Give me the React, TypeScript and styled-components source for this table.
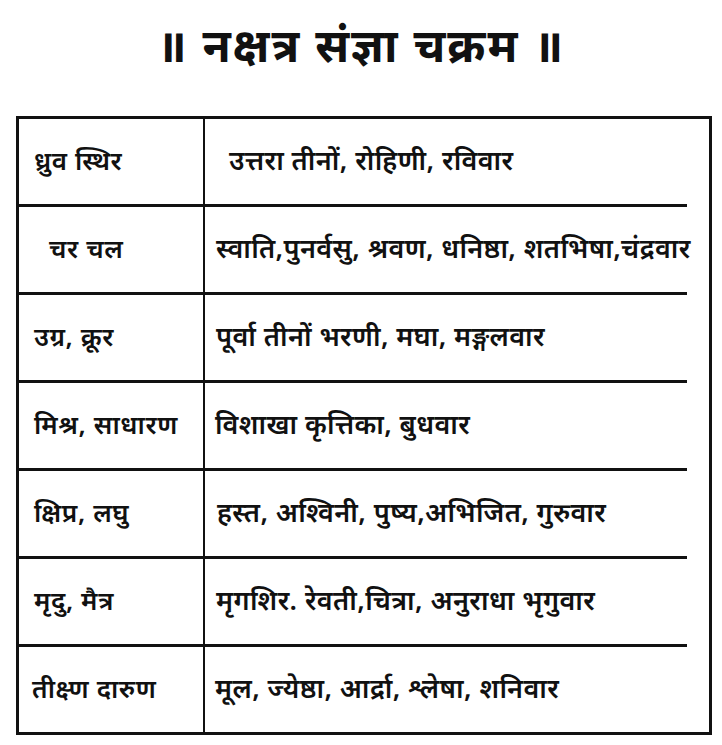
import styled, { createGlobalStyle } from 'styled-components'

const GlobalStyle = createGlobalStyle`
  html, body {
    margin: 0;
    padding: 0;
    background: #fff;
  }
  body {
    font-family: "Noto Sans", "Noto Sans Devanagari", "Lohit Devanagari", sans-serif;
    color: #111;
  }
`

const Page = styled.div`
  width: 722px;
  height: 745px;
  overflow: hidden;
  background: #fff;
`

const Title = styled.h1`
  margin: 0;
  height: 116px;
  padding-top: 14px;
  box-sizing: border-box;
  text-align: center;
  font-size: 46px;
  font-weight: 700;
  line-height: 60px;
  letter-spacing: 2px;
`

const Table = styled.div`
  margin-left: 16px;
  width: 696px;
  border: 3px solid #111;
  box-sizing: border-box;
`

const Row = styled.div<{ $last?: boolean }>`
  display: grid;
  grid-template-columns: 186px 1fr;
  height: 85px;
  margin-right: ${p => (p.$last ? '0' : '22px')};
  border-bottom: ${p => (p.$last ? 'none' : '3px solid #111')};
`

const Name = styled.div<{ $indent: number }>`
  display: flex;
  align-items: center;
  padding: 0 0 4px ${p => p.$indent}px;
  border-right: 2px solid #111;
  font-size: 26px;
  font-weight: 600;
  letter-spacing: 0.6px;
  white-space: nowrap;
  overflow: hidden;
`

const Items = styled.div<{ $indent: number }>`
  display: flex;
  align-items: center;
  padding: 0 0 4px ${p => p.$indent}px;
  font-size: 27px;
  font-weight: 600;
  letter-spacing: 0.4px;
  white-space: nowrap;
`

const rows = [
  { name: 'ध्रुव स्थिर', items: 'उत्तरा तीनों, रोहिणी, रविवार', left: 15, indent: 24 },
  { name: 'चर चल', items: 'स्वाति,पुनर्वसु, श्रवण, धनिष्ठा, शतभिषा,चंद्रवार', left: 30, indent: 11 },
  { name: 'उग्र, क्रूर', items: 'पूर्वा तीनों भरणी, मघा, मङ्गलवार', left: 15, indent: 11 },
  { name: 'मिश्र, साधारण', items: 'विशाखा कृत्तिका, बुधवार', left: 15, indent: 10 },
  { name: 'क्षिप्र, लघु', items: 'हस्त, अश्विनी, पुष्य,अभिजित, गुरुवार', left: 15, indent: 12 },
  { name: 'मृदु, मैत्र', items: 'मृगशिर. रेवती,चित्रा, अनुराधा भृगुवार', left: 15, indent: 11 },
  { name: 'तीक्ष्ण दारुण', items: 'मूल, ज्येष्ठा, आर्द्रा, श्लेषा, शनिवार', left: 13, indent: 10 },
]

export default function App() {
  return (
    <Page>
      <GlobalStyle />
      <Title>॥ नक्षत्र संज्ञा चक्रम ॥</Title>
      <Table>
        {rows.map((r, i) => (
          <Row key={r.name} $last={i === rows.length - 1}>
            <Name $indent={r.left}>{r.name}</Name>
            <Items $indent={r.indent}>{r.items}</Items>
          </Row>
        ))}
      </Table>
    </Page>
  )
}
